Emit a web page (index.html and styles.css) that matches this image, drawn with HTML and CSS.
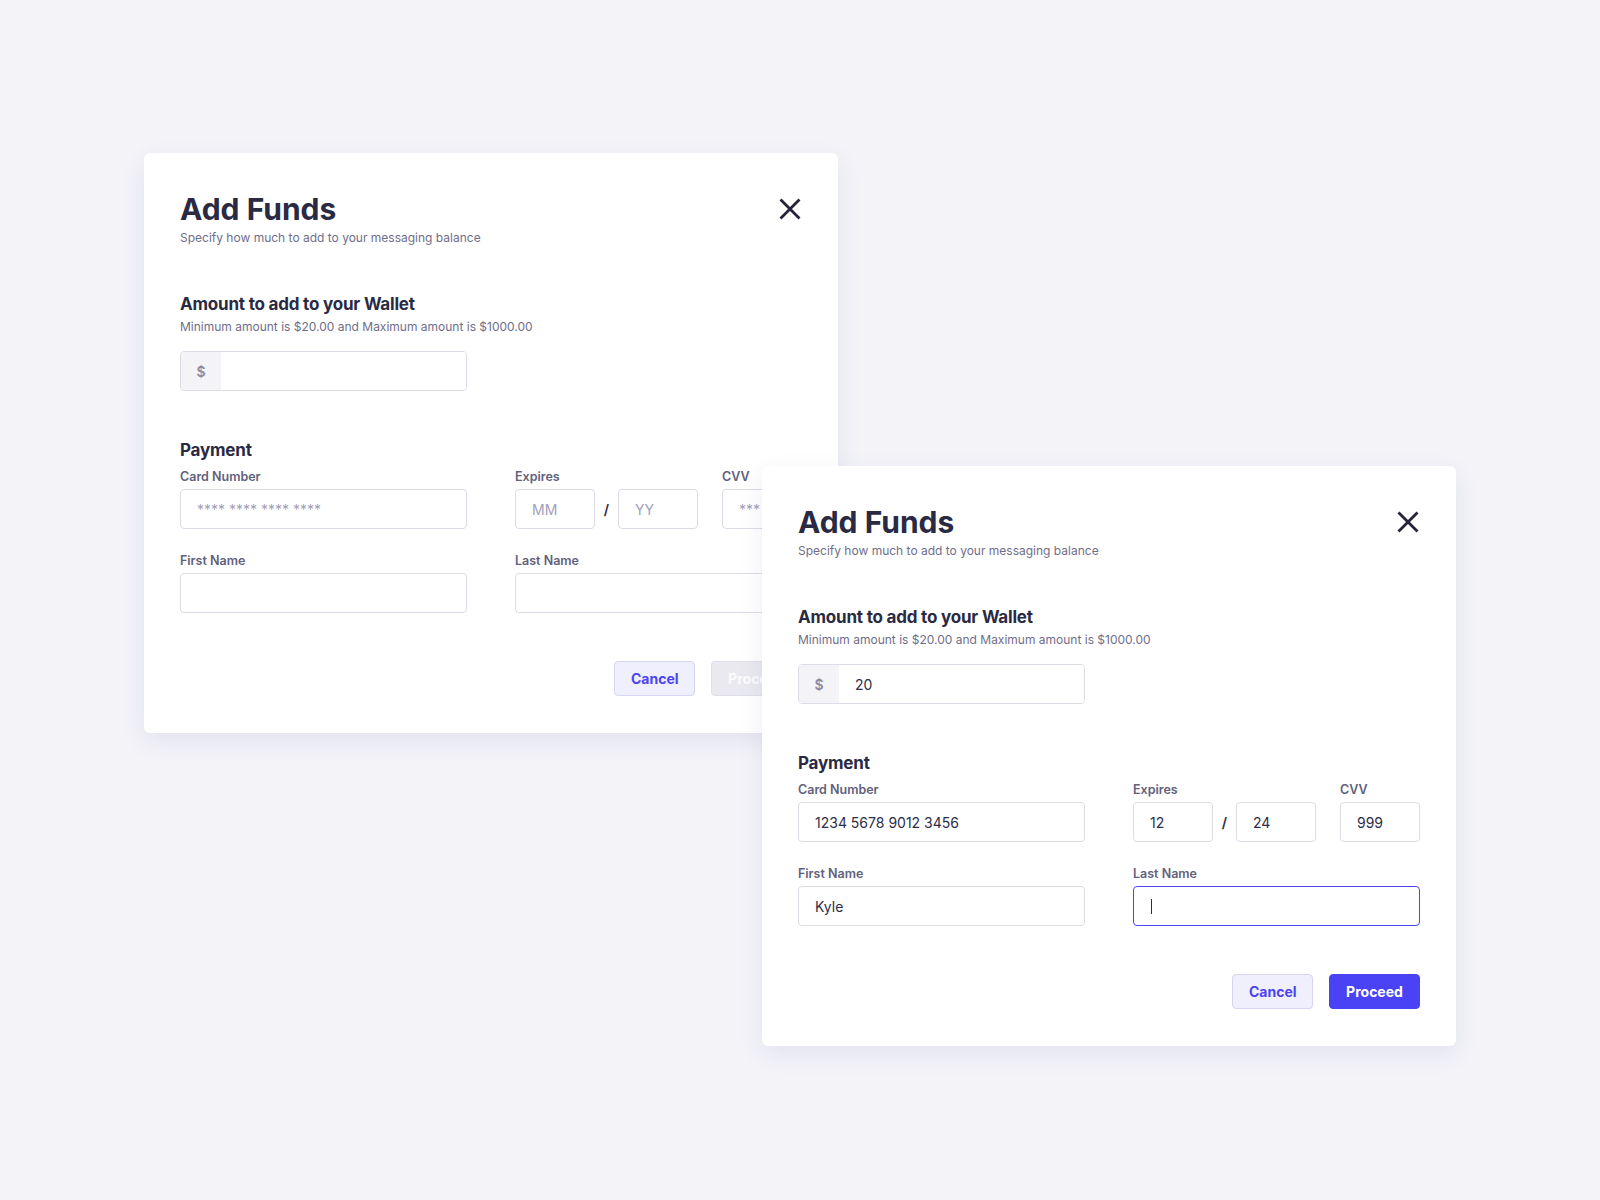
FILE: index.html
```html
<!DOCTYPE html>
<html lang="en">
<head>
	<meta charset="UTF-8">
	<title>Add Funds</title>
	<link rel="stylesheet" href="styles.css">
</head>
<body>
	<div class="stage">

		<!-- empty form -->
		<div class="modal modal--back">
			<div class="modal__head">
				<div>
					<h1 class="modal__title">Add Funds</h1>
					<p class="modal__sub">Specify how much to add to your messaging balance</p>
				</div>
				<button class="modal__close" type="button">
					<svg width="24" height="24" viewBox="0 0 24 24"><path d="M2.5 2.5L21.5 21.5M21.5 2.5L2.5 21.5" stroke="#24233a" stroke-width="2.8" fill="none"/></svg>
				</button>
			</div>

			<div class="section section--amount">
				<h2 class="section__title">Amount to add to your Wallet</h2>
				<p class="section__hint">Minimum amount is $20.00 and Maximum amount is $1000.00</p>
				<div class="money">
					<span class="money__prefix">$</span>
					<input class="money__input" type="text" value="">
				</div>
			</div>

			<div class="section section--payment">
				<h2 class="section__title">Payment</h2>
				<div class="grid">
					<div class="field">
						<label class="field__label">Card Number</label>
						<input class="field__input" type="text" placeholder="**** **** **** ****">
					</div>
					<div class="field">
						<div class="split">
							<div class="expires">
								<label class="field__label">Expires</label>
								<div class="expires__row">
									<input class="field__input field__input--short" type="text" placeholder="MM">
									<span class="expires__slash">/</span>
									<input class="field__input field__input--short" type="text" placeholder="YY">
								</div>
							</div>
							<div class="cvv">
								<label class="field__label">CVV</label>
								<input class="field__input field__input--short" type="text" placeholder="***">
							</div>
						</div>
					</div>
					<div class="field">
						<label class="field__label">First Name</label>
						<input class="field__input" type="text">
					</div>
					<div class="field">
						<label class="field__label">Last Name</label>
						<input class="field__input" type="text">
					</div>
				</div>
			</div>

			<div class="modal__actions">
				<button class="btn btn--ghost" type="button">Cancel</button>
				<button class="btn btn--primary" type="button" disabled>Proceed</button>
			</div>
		</div>

		<!-- filled form -->
		<div class="modal modal--front">
			<div class="modal__head">
				<div>
					<h1 class="modal__title">Add Funds</h1>
					<p class="modal__sub">Specify how much to add to your messaging balance</p>
				</div>
				<button class="modal__close" type="button">
					<svg width="24" height="24" viewBox="0 0 24 24"><path d="M2.5 2.5L21.5 21.5M21.5 2.5L2.5 21.5" stroke="#24233a" stroke-width="2.8" fill="none"/></svg>
				</button>
			</div>

			<div class="section section--amount">
				<h2 class="section__title">Amount to add to your Wallet</h2>
				<p class="section__hint">Minimum amount is $20.00 and Maximum amount is $1000.00</p>
				<div class="money">
					<span class="money__prefix">$</span>
					<input class="money__input" type="text" value="20">
				</div>
			</div>

			<div class="section section--payment">
				<h2 class="section__title">Payment</h2>
				<div class="grid">
					<div class="field">
						<label class="field__label">Card Number</label>
						<input class="field__input" type="text" value="1234 5678 9012 3456">
					</div>
					<div class="field">
						<div class="split">
							<div class="expires">
								<label class="field__label">Expires</label>
								<div class="expires__row">
									<input class="field__input field__input--short" type="text" value="12">
									<span class="expires__slash">/</span>
									<input class="field__input field__input--short" type="text" value="24">
								</div>
							</div>
							<div class="cvv">
								<label class="field__label">CVV</label>
								<input class="field__input field__input--short" type="text" value="999">
							</div>
						</div>
					</div>
					<div class="field">
						<label class="field__label">First Name</label>
						<input class="field__input" type="text" value="Kyle">
					</div>
					<div class="field">
						<label class="field__label">Last Name</label>
						<div class="field__input field__input--focus"><span class="caret"></span></div>
					</div>
				</div>
			</div>

			<div class="modal__actions">
				<button class="btn btn--ghost" type="button">Cancel</button>
				<button class="btn btn--primary" type="button">Proceed</button>
			</div>
		</div>

	</div>
</body>
</html>
```

FILE: styles.css
```css
* {
	box-sizing: border-box;
}
body {
	margin: 0;
	background-color: #f3f3f8;
	font-family: Inter, "Noto Sans", sans-serif;
	color: #2a2a43;
}
.stage {
	width: 1600px;
	height: 1200px;
	padding-top: 153px;
	overflow: hidden;
}
.modal {
	position: relative;
	width: 694px;
	padding: 36px 36px 37px;
	background-color: #fff;
	border-radius: 6px;
	box-shadow: 0 8px 24px rgba(70, 70, 140, 0.09);
}
.modal--back {
	margin-left: 144px;
}
.modal--front {
	margin-left: 762px;
	margin-top: -267px;
}
.modal__head {
	display: flex;
	justify-content: space-between;
	align-items: flex-start;
}
.modal__title {
	margin: 2px 0 0;
	font-size: 30px;
	line-height: 36px;
	font-weight: 700;
	letter-spacing: 0;
	color: #2a2a43;
}
.modal__sub {
	margin: 2px 0 0;
	font-size: 12px;
	line-height: 18px;
	color: #6f6e8a;
}
.modal__close {
	margin-top: 8px;
	padding: 0;
	border: 0;
	background: none;
	width: 24px;
	height: 24px;
}
.modal__close svg {
	display: block;
}
.section--amount {
	margin-top: 45px;
}
.section--payment {
	margin-top: 47px;
}
.section__title {
	margin: 0;
	font-size: 17px;
	line-height: 24px;
	font-weight: 700;
	letter-spacing: -0.2px;
	color: #2a2a43;
}
.section__hint {
	margin: 3px 0 0;
	font-size: 12px;
	line-height: 16px;
	color: #6f6e8a;
}
.money {
	display: flex;
	width: 287px;
	height: 40px;
	margin-top: 16px;
	border: 1px solid #dddce6;
	border-radius: 4px;
	overflow: hidden;
}
.money__prefix {
	width: 40px;
	display: flex;
	align-items: center;
	justify-content: center;
	background-color: #f4f4f8;
	color: #8b8aa5;
	font-size: 14px;
	font-weight: 600;
}
.money__input {
	flex: 1;
	min-width: 0;
	border: 0;
	outline: none;
	padding: 0 16px;
	font-family: inherit;
	font-size: 14px;
	color: #2e2d48;
}
.grid {
	display: grid;
	grid-template-columns: 287px 287px;
	column-gap: 48px;
	row-gap: 24px;
	margin-top: 7px;
}
.field__label {
	display: block;
	font-size: 12.5px;
	line-height: 16px;
	font-weight: 600;
	color: #62617c;
	margin-bottom: 4px;
}
.field__input {
	display: block;
	width: 100%;
	height: 40px;
	padding: 0 16px;
	border: 1px solid #dddce6;
	border-radius: 4px;
	background: #fff;
	outline: none;
	font-family: inherit;
	font-size: 14px;
	color: #2e2d48;
}
.field__input::placeholder {
	color: #a2a1b8;
}
.field__input--short {
	width: 80px;
}
.field__input--focus {
	display: flex;
	align-items: center;
	border-color: #4b45f2;
}
.caret {
	width: 1px;
	height: 15px;
	margin-left: 1px;
	background-color: #2e2d48;
}
.split {
	display: flex;
	justify-content: space-between;
}
.expires__row {
	display: flex;
	align-items: center;
}
.expires__slash {
	width: 23px;
	text-align: center;
	font-size: 14px;
	font-weight: 600;
	color: #2a2a43;
}
.modal__actions {
	display: flex;
	justify-content: flex-end;
	gap: 16px;
	margin-top: 48px;
}
.btn {
	height: 35px;
	padding: 0 16px;
	border-radius: 4px;
	font-family: inherit;
	font-size: 14px;
	font-weight: 700;
	cursor: pointer;
}
.btn--ghost {
	width: 81px;
	background-color: #efeffd;
	border: 1px solid #d6d5f8;
	color: #4b44f0;
}
.btn--primary {
	width: 91px;
	background-color: #4a43f5;
	border: 1px solid #4a43f5;
	color: #fff;
}
.btn--primary:disabled {
	background-color: #e9e9ef;
	border-color: #dfdfe7;
	color: #fbfbfd;
	cursor: default;
}
```
